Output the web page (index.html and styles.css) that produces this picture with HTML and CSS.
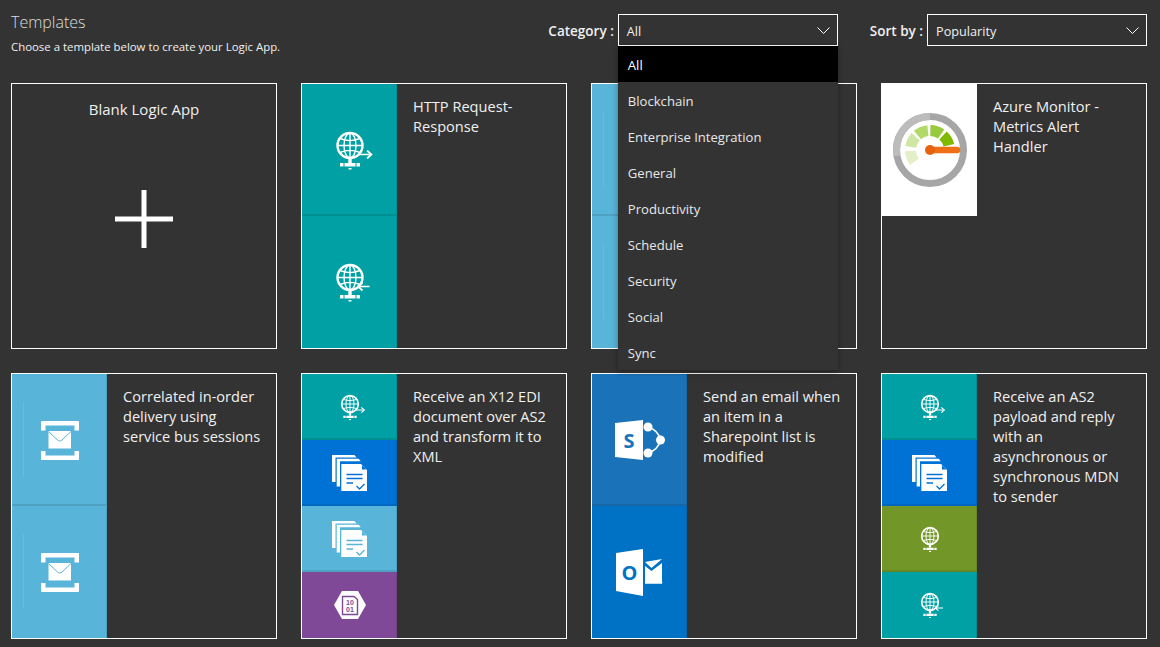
FILE: index.html
```html
<!DOCTYPE html>
<html lang="en">
<head>
    <meta charset="UTF-8">
    <meta name="viewport" content="width=device-width, initial-scale=1.0">
    <title>Templates</title>
    <link rel="stylesheet" href="styles.css">
</head>
<body>

<svg class="icon-defs" width="0" height="0">
    <symbol id="globe" viewBox="0 0 48 48">
        <g fill="none" stroke="#fff">
            <circle cx="24" cy="19.5" r="12.500" stroke-width="2.400"/>
            <ellipse cx="24" cy="19.5" rx="6" ry="12.500" stroke-width="1.400"/>
            <path d="M24 7v25M11.500 19.500h25M14 12.500c6 2.500 14 2.500 20 0M14 26.500c6-2.500 14-2.500 20 0" stroke-width="1.400"/>
            <path d="M24 32v5" stroke-width="3.400"/>
        </g>
        <path fill="#fff" d="M14 37h3.500v3.500H14zM18.500 37h11v3.500h-11zM30.500 37H34v3.500h-3.500zM22.500 42h3v1.400h-3z"/>
    </symbol>
    <symbol id="globe-out" viewBox="0 0 48 48">
        <use href="#globe"/>
        <path fill="none" stroke="#fff" stroke-width="1.700" d="M33 28.500h11.500M41 24.500l4.500 4-4.500 4"/>
    </symbol>
    <symbol id="globe-in" viewBox="0 0 48 48">
        <use href="#globe"/>
        <path fill="none" stroke="#fff" stroke-width="1.700" d="M33 28.500h10.500M36.500 24.500l-4.500 4 4.500 4"/>
    </symbol>
    <symbol id="docs" viewBox="0 0 36 36">
        <path fill="#fff" d="M0 0h22.500l2 2.500H3.500V27H0z"/>
        <path fill="#fff" d="M4.700 3.700h22l2 2.500H8v25.300H4.700z"/>
        <path fill="#fff" d="M9.300 9H29l6 6v21H9.300z"/>
        <path class="docs-ink" fill="none" stroke-width="1.300" d="M14.500 19.500h16M14.500 23.500h16M14.500 28h6.500M24.500 31l3 3 5-5"/>
        <path class="docs-ink" stroke="none" d="M30 10v4.500h4.500z"/>
    </symbol>
    <symbol id="mail" viewBox="0 0 38 39">
        <path fill="#fff" d="M1 0h36a1 1 0 0 1 1 1v8.500h-4.500v-5h-29v5H0V1a1 1 0 0 1 1-1zM0 30h4.500v4.500h29V30H38v8a1 1 0 0 1-1 1H1a1 1 0 0 1-1-1z"/>
        <path fill="#fff" d="M7.500 10h22.500v17.500H7.500z"/>
        <path fill="none" stroke="#59b4d9" stroke-width="1" d="M7.500 10.500l9 8.500c1.500 1.300 3 1.300 4.500 0l9-8.500"/>
    </symbol>
    <symbol id="chevron" viewBox="0 0 13 7">
        <path fill="none" stroke="#fff" d="M.5.500l6 6 6-6"/>
    </symbol>
    <symbol id="gauge" viewBox="0 0 80 80">
        <circle cx="40" cy="40" r="33.500" fill="none" stroke="#a6a6a6" stroke-width="7"/>
        <circle cx="40" cy="40" r="33.500" fill="none" stroke="#bcbcbc" stroke-width="7" pathLength="360" stroke-dasharray="100 260" transform="rotate(170 40 40)"/>
        <g fill="none" stroke-width="11" transform="rotate(-90 40 40)">
            <circle cx="40" cy="40" r="19.500" stroke="#7fba00" pathLength="360" stroke-dasharray="34 326" transform="rotate(42 40 40)"/>
            <circle cx="40" cy="40" r="19.500" stroke="#98cb3c" pathLength="360" stroke-dasharray="34 326" transform="rotate(1 40 40)"/>
            <circle cx="40" cy="40" r="19.500" stroke="#b2d968" pathLength="360" stroke-dasharray="34 326" transform="rotate(-40 40 40)"/>
            <circle cx="40" cy="40" r="19.500" stroke="#cfe6a4" pathLength="360" stroke-dasharray="34 326" transform="rotate(-81 40 40)"/>
            <circle cx="40" cy="40" r="19.500" stroke="#e2efc9" pathLength="360" stroke-dasharray="34 326" transform="rotate(-127 40 40)"/>
        </g>
        <path stroke="#ee6f14" stroke-width="6.500" stroke-linecap="round" d="M41 40h26"/>
        <circle cx="40" cy="40" r="5" fill="#e8610c"/>
    </symbol>
</svg>

<header class="top-bar">
    <div class="intro">
        <h1>Templates</h1>
        <p>Choose a template below to create your Logic App.</p>
    </div>
    <div class="filters">
        <div class="filter">
            <label>Category :</label>
            <div class="select">
                <span>All</span>
                <svg class="chevron"><use href="#chevron"/></svg>
                <ul class="menu">
                    <li class="selected">All</li>
                    <li>Blockchain</li>
                    <li>Enterprise Integration</li>
                    <li>General</li>
                    <li>Productivity</li>
                    <li>Schedule</li>
                    <li>Security</li>
                    <li>Social</li>
                    <li>Sync</li>
                </ul>
            </div>
        </div>
        <div class="filter">
            <label>Sort by :</label>
            <div class="select">
                <span>Popularity</span>
                <svg class="chevron"><use href="#chevron"/></svg>
            </div>
        </div>
    </div>
</header>

<main class="cards">
    <div class="card blank">
        <h2>Blank Logic App</h2>
        <svg class="plus" viewBox="0 0 58 58"><path fill="#fff" d="M26.500 0h5v26.500H58v5H31.500V58h-5V31.500H0v-5h26.500z"/></svg>
    </div>

    <div class="card">
        <div class="strip">
            <div class="tile teal"><svg class="i48"><use href="#globe-out"/></svg></div>
            <div class="tile teal"><svg class="i48"><use href="#globe-in"/></svg></div>
        </div>
        <h3>HTTP Request-Response</h3>
    </div>

    <div class="card">
        <div class="strip">
            <div class="tile sky lined"><svg class="i-mail"><use href="#mail"/></svg></div>
            <div class="tile sky lined"><svg class="i-mail"><use href="#mail"/></svg></div>
        </div>
    </div>

    <div class="card">
        <div class="strip">
            <div class="tile white short"><svg class="i-gauge"><use href="#gauge"/></svg></div>
        </div>
        <h3>Azure Monitor - Metrics Alert Handler</h3>
    </div>

    <div class="card">
        <div class="strip">
            <div class="tile sky lined"><svg class="i-mail"><use href="#mail"/></svg></div>
            <div class="tile sky lined"><svg class="i-mail"><use href="#mail"/></svg></div>
        </div>
        <h3>Correlated in-order delivery using service bus sessions</h3>
    </div>

    <div class="card">
        <div class="strip">
            <div class="tile teal"><svg class="i32"><use href="#globe-out"/></svg></div>
            <div class="tile azure ink-azure"><svg class="i-docs"><use href="#docs"/></svg></div>
            <div class="tile sky ink-sky"><svg class="i-docs"><use href="#docs"/></svg></div>
            <div class="tile purple">
                <svg class="i-hex" viewBox="0 0 32 28">
                    <path fill="#fff" d="M8 0h16l8 14-8 14H8L0 14z"/>
                    <path fill="none" stroke="#804998" stroke-width="1.400" d="M8.500 5.500h11.500l3.500 3v15H8.500z"/>
                    <text x="16" y="13.500" class="hex-text">10</text>
                    <text x="16" y="20.500" class="hex-text">01</text>
                </svg>
            </div>
        </div>
        <h3>Receive an X12 EDI document over AS2 and transform it to XML</h3>
    </div>

    <div class="card">
        <div class="strip">
            <div class="tile sp-blue">
                <svg class="i-sp" viewBox="0 0 50 41">
                    <path fill="none" stroke="#fff" stroke-width="1.500" d="M33 7c7 2 11 7 12.700 13-1.700 6-5.700 11-12.700 13"/>
                    <circle cx="33" cy="7" r="4.500" fill="#fff"/>
                    <circle cx="45.500" cy="20" r="4.500" fill="#fff"/>
                    <circle cx="33" cy="33" r="4.500" fill="#fff"/>
                    <path fill="#fff" d="M0 3l28-3v40L0 37z"/>
                    <text x="14" y="27.500" class="logo-text sp-ink">S</text>
                </svg>
            </div>
            <div class="tile ol-blue">
                <svg class="i-ol" viewBox="0 0 47 47">
                    <path fill="#fff" d="M0 4l27-4v47L0 42z"/>
                    <text x="13.500" y="30.500" class="logo-text ol-ink">O</text>
                    <path fill="#fff" d="M29 13l17-3-10.500 9zM29 17l6.500 5L46 14v19a1 1 0 0 1-1 1.700H29z"/>
                </svg>
            </div>
        </div>
        <h3>Send an email when an item in a Sharepoint list is modified</h3>
    </div>

    <div class="card">
        <div class="strip">
            <div class="tile teal"><svg class="i32"><use href="#globe-out"/></svg></div>
            <div class="tile azure ink-azure"><svg class="i-docs"><use href="#docs"/></svg></div>
            <div class="tile olive"><svg class="i32"><use href="#globe"/></svg></div>
            <div class="tile teal"><svg class="i32"><use href="#globe-in"/></svg></div>
        </div>
        <h3>Receive an AS2 payload and reply with an asynchronous or synchronous MDN to sender</h3>
    </div>
</main>

</body>
</html>
```

FILE: styles.css
```css
body {
    margin: 0;
    background-color: #333;
    color: #f0f0f0;
    font-family: "Open Sans", "Noto Sans", sans-serif;
    font-size: 13px;
    overflow: hidden;
}

.icon-defs {
    position: absolute;
}

.top-bar {
    display: flex;
    justify-content: space-between;
    height: 83px;
    padding: 0 13px 0 11px;
}

.intro h1 {
    margin: 11px 0 0;
    font-size: 16px;
    line-height: 22px;
    font-weight: 300;
    color: #ddd;
}

.intro p {
    margin: 5px 0 0;
    font-size: 11.400px;
    line-height: 18px;
}

.filters {
    display: flex;
    gap: 32px;
    padding-top: 14px;
}

.filter {
    display: flex;
    gap: 4px;
    align-items: flex-start;
}

.filter label {
    line-height: 34px;
    font-weight: 600;
    font-size: 13.500px;
}

.select {
    position: relative;
    box-sizing: border-box;
    width: 220px;
    height: 32px;
    padding-left: 8px;
    border: 1px solid #fff;
    line-height: 33px;
    font-size: 12.700px;
}

.chevron {
    position: absolute;
    top: 12px;
    right: 7px;
    width: 13px;
    height: 7px;
}

.menu {
    position: absolute;
    z-index: 10;
    top: 31px;
    left: -1px;
    width: 220px;
    margin: 0;
    padding: 0;
    list-style: none;
    background-color: #333;
    box-shadow: 0 2px 6px rgba(0, 0, 0, 0.35);
}

.menu li {
    height: 36px;
    padding-left: 10px;
    line-height: 38px;
    font-size: 13.100px;
    color: #e8e8e8;
}

.menu .selected {
    background-color: #000;
    color: #fff;
}

.cards {
    display: grid;
    grid-template-columns: repeat(4, 266px);
    grid-auto-rows: 266px;
    gap: 24px;
    padding-left: 11px;
}

.card {
    display: flex;
    box-sizing: border-box;
    border: 1px solid #fff;
}

.blank {
    flex-direction: column;
    align-items: center;
}

.blank h2 {
    margin: 15px 0 0;
    font-size: 15px;
    line-height: 20px;
    font-weight: 400;
}

.plus {
    width: 58px;
    height: 58px;
    margin-top: 71px;
}

.card h3 {
    flex: 1;
    margin: 12px 12px 0 16px;
    font-size: 14.600px;
    line-height: 20px;
    font-weight: 400;
}

.strip {
    display: flex;
    flex-direction: column;
    flex: none;
    width: 95px;
}

.tile {
    position: relative;
    flex: 1;
    display: flex;
    align-items: center;
    justify-content: center;
    box-shadow: inset -1px -2px 0 rgba(0, 0, 0, 0.1);
}

.tile:last-child {
    box-shadow: inset -1px 0 0 rgba(0, 0, 0, 0.1);
}

.short {
    flex: none;
    height: 132px;
}

.lined::before {
    content: "";
    position: absolute;
    top: 28px;
    left: 11px;
    width: 1px;
    height: 75px;
    background-color: rgba(255, 255, 255, 0.1);
}

.teal { background-color: #00a0a4; }
.sky { background-color: #59b4d9; }
.azure { background-color: #0072d6; }
.purple { background-color: #804998; }
.olive { background-color: #739629; }
.white, .white:last-child { background-color: #fff; box-shadow: none; }
.sp-blue { background-color: #1a73b9; }
.ol-blue { background-color: #0072c6; }

.ink-azure { --ink: #0072d6; }
.ink-sky { --ink: #59b4d9; }
.docs-ink { stroke: var(--ink); }
path.docs-ink[stroke="none"] { fill: var(--ink); stroke: none; }

.i48 { width: 48px; height: 48px; }
.i32 { width: 32px; height: 32px; }
.i-docs { width: 36px; height: 36px; }
.i-hex { width: 32px; height: 28px; }
.i-mail { width: 38px; height: 39px; }
.i-sp { width: 50px; height: 41px; }
.i-ol { width: 47px; height: 47px; }
.i-gauge { width: 80px; height: 80px; }

.hex-text {
    font-family: "Liberation Sans", sans-serif;
    font-size: 7px;
    font-weight: bold;
    fill: #804998;
    text-anchor: middle;
}

.logo-text {
    font-family: "Open Sans", sans-serif;
    font-size: 20px;
    font-weight: 700;
    text-anchor: middle;
}

.sp-ink { fill: #1a73b9; }
.ol-ink { fill: #0072c6; }
```
